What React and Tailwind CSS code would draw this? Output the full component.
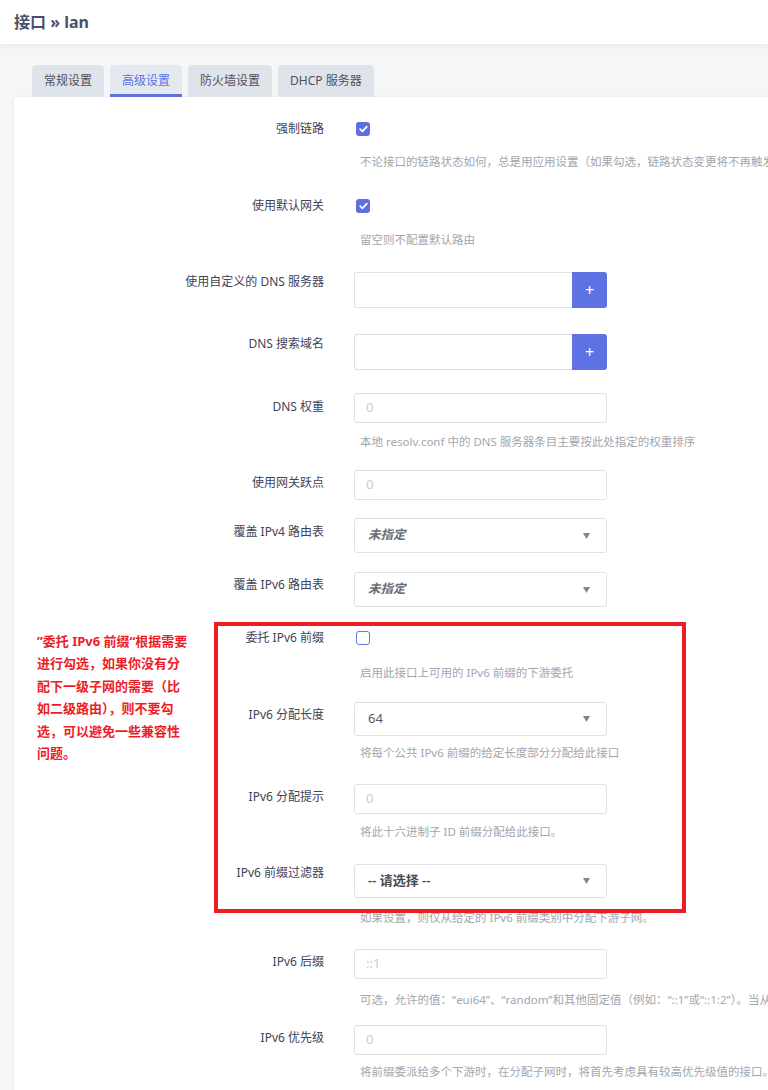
import React from "react";

const FONT = { fontFamily: '"Noto Sans", "Noto Sans CJK SC", sans-serif' };

function Check({ checked }) {
  if (checked) {
    return (
      <span className="flex h-[14px] w-[14px] items-center justify-center rounded-[3px] bg-[#5e6fe0]">
        <svg width="9" height="8" viewBox="0 0 9 8" fill="none">
          <path d="M1.2 4.2 L3.4 6.3 L7.8 1.6" stroke="#fff" strokeWidth="1.7" strokeLinecap="round" strokeLinejoin="round" />
        </svg>
      </span>
    );
  }
  return <span className="block h-[14px] w-[14px] rounded-[3px] border-[1.5px] border-[#6675de] bg-white" />;
}

function Arrow() {
  return (
    <svg width="7" height="6" viewBox="0 0 7 6">
      <path d="M0 0 H7 L3.5 6 Z" fill="#7d8596" />
    </svg>
  );
}

function Label({ children, pt }) {
  return (
    <div className={`w-[310px] shrink-0 text-right text-[12px] leading-[18px] text-[#3e4358] ${pt}`}>{children}</div>
  );
}

function Desc({ children, mt }) {
  return (
    <div className={`ml-[346px] whitespace-nowrap text-[11.5px] leading-[18px] text-[#a2a6ae] ${mt}`}>{children}</div>
  );
}

function CheckRow({ label, checked, mt }) {
  return (
    <div className={`flex ${mt}`}>
      <Label pt="pt-0">{label}</Label>
      <div className="ml-[32px] flex h-[18px] items-center">
        <Check checked={checked} />
      </div>
    </div>
  );
}

function TextRow({ label, placeholder, h, mt, pt }) {
  return (
    <div className={`flex ${mt}`}>
      <Label pt={pt}>{label}</Label>
      <div className={`ml-[30px] flex w-[253px] items-center rounded-[3px] border border-[#dfe1e6] bg-white pl-[11px] text-[13px] text-[#c9ccd2] ${h}`}>
        {placeholder}
      </div>
    </div>
  );
}

function AddRow({ label, mt }) {
  return (
    <div className={`flex ${mt}`}>
      <Label pt="pt-px">{label}</Label>
      <div className="ml-[30px] flex h-[36px] w-[253px]">
        <div className="flex-1 rounded-l-[3px] border border-r-0 border-[#dfe1e6] bg-white" />
        <div className="flex w-[35px] items-center justify-center rounded-r-[3px] bg-[#5e72e4] text-[16px] leading-none text-white">+</div>
      </div>
    </div>
  );
}

function SelectRow({ label, value, kind, mt, pt, h }) {
  let cls = "text-[13px] text-[#555a66]";
  if (kind === "italic") cls = "text-[12.5px] font-bold italic text-[#6b6e75]";
  if (kind === "bold") cls = "text-[13px] font-semibold text-[#474b55]";
  return (
    <div className={`flex ${mt}`}>
      <Label pt={pt}>{label}</Label>
      <div className={`ml-[30px] flex w-[253px] items-center justify-between rounded-[3px] border border-[#dfe1e6] bg-white pl-[13px] pr-[16px] ${h}`}>
        <span className={cls}>{value}</span>
        <Arrow />
      </div>
    </div>
  );
}

export default function App() {
  return (
    <div className="relative h-[1090px] w-[768px] overflow-hidden bg-[#f5f6f8]" style={FONT}>
      <div className="flex h-[44px] items-center bg-white px-[14px] shadow-[0_2px_6px_rgba(0,0,0,0.05)]">
        <span className="text-[16px] font-bold text-[#4a5068]">接口 » lan</span>
      </div>

      <div className="ml-[32px] mt-[21px] flex h-[32px] gap-[6px]">
        <div className="flex items-center rounded-t-[4px] bg-[#dfe3ea] px-3 text-[12px] text-[#4d515c]">常规设置</div>
        <div className="flex items-center rounded-t-[4px] border-b-[3px] border-[#5e72e4] bg-[#e4e8ef] px-3 pt-[3px] text-[12px] text-[#5e72e4]">高级设置</div>
        <div className="flex items-center rounded-t-[4px] bg-[#dfe3ea] px-3 text-[12px] text-[#4d515c]">防火墙设置</div>
        <div className="flex items-center rounded-t-[4px] bg-[#dfe3ea] px-3 text-[12px] text-[#4d515c]">DHCP 服务器</div>
      </div>

      <div className="ml-[14px] h-[1000px] w-[800px] rounded-tl-[3px] bg-white pt-[23px] shadow-[0_0_4px_rgba(0,0,0,0.06)]">
        <CheckRow label="强制链路" checked mt="mt-0" />
        <Desc mt="mt-[15px]">不论接口的链路状态如何，总是用应用设置（如果勾选，链路状态变更将不再触发热插拔事件）</Desc>

        <CheckRow label="使用默认网关" checked mt="mt-[26px]" />
        <Desc mt="mt-[16px]">留空则不配置默认路由</Desc>

        <AddRow label="使用自定义的 DNS 服务器" mt="mt-[23px]" />
        <AddRow label="DNS 搜索域名" mt="mt-[26px]" />

        <TextRow label="DNS 权重" placeholder="0" h="h-[30px]" mt="mt-[23px]" pt="pt-[5px]" />
        <Desc mt="mt-[10px]">本地 resolv.conf 中的 DNS 服务器条目主要按此处指定的权重排序</Desc>

        <TextRow label="使用网关跃点" placeholder="0" h="h-[30px]" mt="mt-[19px]" pt="pt-[4px]" />

        <SelectRow label="覆盖 IPv4 路由表" value="未指定" kind="italic" h="h-[35px]" mt="mt-[18px]" pt="pt-[5px]" />
        <SelectRow label="覆盖 IPv6 路由表" value="未指定" kind="italic" h="h-[35px]" mt="mt-[19px]" pt="pt-[4px]" />

        <CheckRow label="委托 IPv6 前缀" checked={false} mt="mt-[22px]" />
        <Desc mt="mt-[17px]">启用此接口上可用的 IPv6 前缀的下游委托</Desc>

        <SelectRow label="IPv6 分配长度" value="64" kind="plain" h="h-[34px]" mt="mt-[20px]" pt="pt-[4px]" />
        <Desc mt="mt-[8px]">将每个公共 IPv6 前缀的给定长度部分分配给此接口</Desc>

        <TextRow label="IPv6 分配提示" placeholder="0" h="h-[30px]" mt="mt-[22px]" pt="pt-[4px]" />
        <Desc mt="mt-[9px]">将此十六进制子 ID 前缀分配给此接口。</Desc>

        <SelectRow label="IPv6 前缀过滤器" value="-- 请选择 --" kind="bold" h="h-[34px]" mt="mt-[23px]" pt="pt-0" />
        <Desc mt="mt-[11px]">如果设置，则仅从给定的 IPv6 前缀类别中分配下游子网。</Desc>

        <TextRow label="IPv6 后缀" placeholder="::1" h="h-[30px]" mt="mt-[22px]" pt="pt-[4px]" />
        <Desc mt="mt-[12px]">可选，允许的值：“eui64”、“random”和其他固定值（例如：“::1”或“::1:2”）。当从委托服务器收到 IPv6 前缀时，使用后缀形成接口标识符。</Desc>

        <TextRow label="IPv6 优先级" placeholder="0" h="h-[30px]" mt="mt-[16px]" pt="pt-[4px]" />
        <Desc mt="mt-[8px]">将前缀委派给多个下游时，在分配子网时，将首先考虑具有较高优先级值的接口。</Desc>
      </div>

      <div className="pointer-events-none absolute left-[214px] top-[622px] h-[291px] w-[472px] border-4 border-[#ee1c25]" />

      <div className="absolute left-[37px] top-[630px] text-[13px] font-bold leading-[22.4px] text-[#ee1c25]">
        ”委托 IPv6 前缀“根据需要<br />
        进行勾选，如果你没有分<br />
        配下一级子网的需要（比<br />
        如二级路由），则不要勾<br />
        选，可以避免一些兼容性<br />
        问题。
      </div>
    </div>
  );
}
